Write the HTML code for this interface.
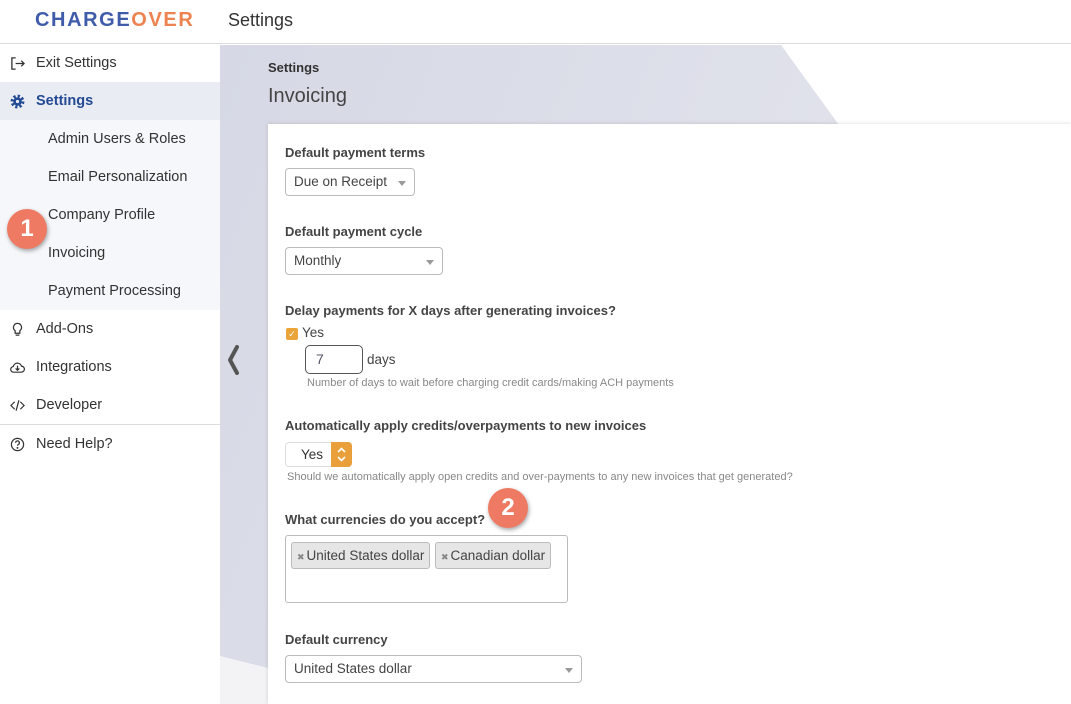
<!DOCTYPE html>
<html><head><meta charset="utf-8"><style>
*{box-sizing:border-box;margin:0;padding:0}
body{width:1071px;height:704px;overflow:hidden;position:relative;background:#fff;font-family:"Liberation Sans",sans-serif;color:#333}
.a{position:absolute}
.hdr{left:0;top:0;width:1071px;height:44px;background:#fff;border-bottom:1px solid #dcdce0}
.logo{left:35px;top:9px;font-weight:bold;font-size:20px;letter-spacing:1.6px;color:#3f5cab}
.logo span{color:#ec8351}
.side{left:0;top:44px;width:220px;height:660px;background:#fff}
.it{position:absolute;left:0;width:220px;height:38px;font-size:14.5px;line-height:38px;color:#333}
.it .tx{position:absolute;left:36px}
.sub .tx{left:48px}
.ic{position:absolute;left:10px;top:12px;width:15px;height:15px}
.lbl{position:absolute;left:285px;font-size:13px;font-weight:bold;color:#444}
.sel{position:absolute;border:1px solid #bbb;border-radius:4px;background:#fff;font-size:13.5px;color:#444;padding-left:8px;line-height:26px;height:28px}
.sel:after{content:"";position:absolute;right:8px;top:12px;border-left:4px solid transparent;border-right:4px solid transparent;border-top:5px solid #999}
.help{position:absolute;font-size:11px;color:#888}
.badge{position:absolute;width:40px;height:40px;border-radius:50%;background:#ef7a63;color:#fff;font-size:24px;font-weight:bold;text-align:center;line-height:40px;box-shadow:1px 2px 4px rgba(0,0,0,.35)}
.tag{position:absolute;top:542px;height:27px;background:#e6e6e6;border:1px solid #bbb;border-radius:3px;font-size:13.5px;color:#444;line-height:25px;padding:0 5px 0 5px}
.tag i{font-style:normal;font-size:9px;color:#888;margin-right:2px}
</style></head><body>
<div class="a hdr"></div>
<div class="a logo">CHARGE<span>OVER</span></div>
<div class="a" style="left:228px;top:10px;font-size:18px;color:#333">Settings</div>
<svg class="a" style="left:220px;top:45px" width="851" height="659">
<defs><linearGradient id="g" x1="0" y1="0" x2="1" y2="0.3"><stop offset="0" stop-color="#d6d9e5"/><stop offset="1" stop-color="#e4e5ee"/></linearGradient></defs>
<polygon points="0,0 561,0 619,80 851,80 851,659 0,659" fill="url(#g)"/>
<polygon points="0,611 48,623 48,659 0,659" fill="#f3f3f6"/>
</svg>
<div class="a" style="left:268px;top:124px;width:803px;height:580px;background:#fff;box-shadow:0 0 4px rgba(0,0,0,.15)"></div>
<div class="a" style="left:268px;top:60px;font-size:13px;font-weight:bold;color:#333">Settings</div>
<div class="a" style="left:268px;top:85px;font-size:20px;color:#444">Invoicing</div>
<svg class="a" style="left:226px;top:344px" width="14" height="32" viewBox="0 0 14 32"><path d="M11 3L4 16l7 13" fill="none" stroke="#555" stroke-width="4" stroke-linecap="round" stroke-linejoin="round"/></svg>
<div class="a side">
<div class="it" style="top:0"><svg class="ic" viewBox="0 0 16 16" fill="none" stroke="#333" stroke-width="1.4"><path d="M6 2H2v12h4M6 8h9M12 5l3 3-3 3"/></svg><span class="tx">Exit Settings</span></div>
<div class="it" style="top:38px;background:#e9ecf3;color:#234a94;font-weight:bold"><svg class="ic" viewBox="0 0 16 16"><circle cx="8" cy="8" r="5.8" fill="none" stroke="#234a94" stroke-width="3.2" stroke-dasharray="2.4 2.15"/><circle cx="8" cy="8" r="4.6" fill="#234a94"/><circle cx="8" cy="8" r="1.7" fill="#e9ecf3"/></svg><span class="tx">Settings</span></div>
<div class="a" style="left:0;top:76px;width:220px;height:190px;background:#f6f7fa"></div>
<div class="it sub" style="top:76px"><span class="tx">Admin Users &amp; Roles</span></div>
<div class="it sub" style="top:114px"><span class="tx">Email Personalization</span></div>
<div class="it sub" style="top:152px"><span class="tx">Company Profile</span></div>
<div class="it sub" style="top:190px"><span class="tx">Invoicing</span></div>
<div class="it sub" style="top:228px"><span class="tx">Payment Processing</span></div>
<div class="it" style="top:266px"><svg class="ic" viewBox="0 0 16 16" fill="none" stroke="#333" stroke-width="1.3"><path d="M8 1.5a4.3 4.3 0 0 0-2.5 7.8V12h5V9.3A4.3 4.3 0 0 0 8 1.5zM6 14h4"/></svg><span class="tx">Add-Ons</span></div>
<div class="it" style="top:304px"><svg class="ic" viewBox="0 0 16 16" fill="none" stroke="#333" stroke-width="1.3"><path d="M4 13a3 3 0 0 1-.5-6 4.5 4.5 0 0 1 8.7-.5A3 3 0 0 1 12 13zM8 6v5M6 9l2 2 2-2"/></svg><span class="tx">Integrations</span></div>
<div class="it" style="top:342px"><svg class="ic" viewBox="0 0 16 16" fill="none" stroke="#333" stroke-width="1.3"><path d="M5 4L1 8l4 4M11 4l4 4-4 4M9.5 2.5l-3 11"/></svg><span class="tx">Developer</span></div>
<div class="a" style="left:0;top:380px;width:220px;height:1px;background:#ddd"></div>
<div class="it" style="top:381px"><svg class="ic" viewBox="0 0 16 16" fill="none" stroke="#333" stroke-width="1.3"><circle cx="8" cy="8" r="6.5"/><path d="M6 6.2a2 2 0 1 1 2.8 1.8c-.6.3-.8.7-.8 1.3"/><circle cx="8" cy="11.6" r=".4" fill="#333"/></svg><span class="tx">Need Help?</span></div>
</div>
<div class="badge" style="left:7px;top:209px">1</div>
<div class="lbl" style="top:145px">Default payment terms</div>
<div class="sel" style="left:285px;top:168px;width:130px">Due on Receipt</div>
<div class="lbl" style="top:224px">Default payment cycle</div>
<div class="sel" style="left:285px;top:247px;width:158px">Monthly</div>
<div class="lbl" style="top:303px">Delay payments for X days after generating invoices?</div>
<div class="a" style="left:286px;top:328px;width:12px;height:12px;background:#eaa43a;border-radius:2px;color:#fff;font-size:9px;line-height:12px;text-align:center">✓</div>
<div class="a" style="left:302px;top:325px;font-size:13.5px;color:#444">Yes</div>
<div class="a" style="left:305px;top:345px;width:58px;height:29px;border:1px solid #555;border-radius:5px;font-size:14px;color:#556;line-height:27px;padding-left:10px">7</div>
<div class="a" style="left:367px;top:352px;font-size:13.5px;color:#444">days</div>
<div class="help" style="left:307px;top:377px">Number of days to wait before charging credit cards/making ACH payments</div>
<div class="lbl" style="top:418px">Automatically apply credits/overpayments to new invoices</div>
<div class="a" style="left:285px;top:442px;width:67px;height:25px;border:1px solid #ddd;border-radius:4px;font-size:13.5px;color:#333;line-height:23px;padding-left:15px;background:#fff">Yes</div>
<div class="a" style="left:331px;top:442px;width:21px;height:25px;background:#e9a03a;border-radius:0 4px 4px 0"><svg width="21" height="25" viewBox="0 0 21 25" fill="none" stroke="#fff" stroke-width="1.6"><path d="M7 10l3.5-3.5L14 10M7 15l3.5 3.5L14 15"/></svg></div>
<div class="help" style="left:287px;top:471px">Should we automatically apply open credits and over-payments to any new invoices that get generated?</div>
<div class="lbl" style="top:512px">What currencies do you accept?</div>
<div class="badge" style="left:488px;top:488px">2</div>
<div class="a" style="left:285px;top:535px;width:283px;height:68px;border:1px solid #bbb;border-radius:3px"></div>
<div class="tag" style="left:291px"><i>✖</i>United States dollar</div>
<div class="tag" style="left:435px"><i>✖</i>Canadian dollar</div>
<div class="lbl" style="top:632px">Default currency</div>
<div class="sel" style="left:285px;top:655px;width:297px">United States dollar</div>
</body></html>
